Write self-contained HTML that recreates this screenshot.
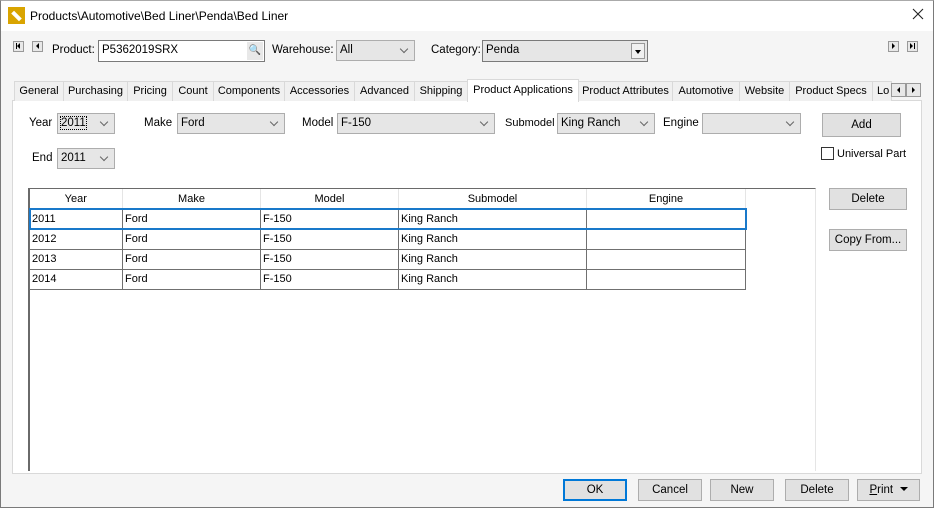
<!DOCTYPE html>
<html><head><style>
*{box-sizing:border-box;margin:0;padding:0}
body{width:934px;height:508px;overflow:hidden;font-family:"Liberation Sans",sans-serif;font-size:11px;color:#000;background:#f5f5f5;position:relative}
.a{position:absolute;white-space:nowrap}
.win{left:0;top:0;width:934px;height:508px;border:1px solid #7a7a7a;border-top:1px solid #aaa}
.title{left:1px;top:1px;width:932px;height:30px;background:#fff}
.sel{position:absolute;background:#e6e6e6;border:1px solid #adadad;padding:3px 0 0 3px;font-size:11.5px;height:21px;white-space:nowrap}
.sel:after{content:"";position:absolute;right:7px;top:5px;width:5px;height:5px;border-right:1px solid #666;border-bottom:1px solid #666;transform:rotate(45deg)}
.btn{position:absolute;background:#e1e1e1;border:1px solid #adadad;text-align:center;font-size:11.5px;padding-top:4px;height:22px;white-space:nowrap}
.tab{position:absolute;top:81px;height:20px;border:1px solid #d9d9d9;border-bottom:none;background:#f0f0f0;font-size:11px;padding:3px 0 0 0;text-align:center;white-space:nowrap;overflow:hidden}
.nav{position:absolute;width:11px;height:11px;border:1px solid #999;background:#e8e8e8}
.tri{position:absolute;width:0;height:0;border-top:3px solid transparent;border-bottom:3px solid transparent}
table{border-collapse:collapse;position:absolute;left:29px;top:189px;font-size:11px}
td{border:1px solid #707070;height:20px;padding:0 2px;white-space:nowrap}
th{font-weight:normal;height:20px;border-right:1px solid #e5e5e5;border-bottom:1px solid #e5e5e5;background:#fff}
</style></head><body>
<div class="a win"></div>
<div class="a title"></div>
<div class="a" style="left:8px;top:7px;width:17px;height:17px;background:#d9a400"></div>
<div class="a" style="left:11px;top:14px;width:11px;height:4px;background:#fff;transform:rotate(45deg)"></div>
<div class="a" style="left:30px;top:9px;font-size:12px">Products\Automotive\Bed Liner\Penda\Bed Liner</div>
<svg class="a" style="left:912px;top:8px" width="12" height="12"><path d="M1 1L11 11M11 1L1 11" stroke="#222" stroke-width="1.1"/></svg>

<div class="nav" style="left:13px;top:41px"></div><div class="a" style="left:16px;top:43px;width:1px;height:6px;background:#000"></div><div class="tri" style="left:17px;top:43px;border-right:3px solid #000"></div>
<div class="nav" style="left:32px;top:41px"></div><div class="tri" style="left:36px;top:43px;border-right:3px solid #000"></div>
<div class="a" style="left:52px;top:44px;font-size:11.5px">Product:</div>
<div class="a" style="left:98px;top:40px;width:167px;height:22px;border:1px solid #7a7a7a;background:#fff;padding:3px 0 0 3px;font-size:11.5px">P5362019SRX</div>
<div class="a" style="left:247px;top:42px;width:16px;height:18px;background:#e8e8e8;color:#2a6fb8;font-size:10px;text-align:center;padding-top:3px">🔍</div>
<div class="a" style="left:272px;top:44px;font-size:11.5px">Warehouse:</div>
<div class="sel" style="left:336px;top:40px;width:79px">All</div>
<div class="a" style="left:431px;top:44px;font-size:11.5px">Category:</div>
<div class="a" style="left:482px;top:40px;width:166px;height:22px;border:1px solid #7a7a7a;background:#e6e6e6;padding:3px 0 0 3px;font-size:11.5px">Penda</div>
<div class="a" style="left:631px;top:43px;width:14px;height:16px;border:1px solid #999;background:#f0f0f0"></div><div class="a" style="left:635px;top:50px;border-left:3px solid transparent;border-right:3px solid transparent;border-top:4px solid #000;width:0;height:0"></div>
<div class="nav" style="left:888px;top:41px"></div><div class="tri" style="left:892px;top:43px;border-left:3px solid #000"></div>
<div class="nav" style="left:907px;top:41px"></div><div class="tri" style="left:910px;top:43px;border-left:3px solid #000"></div><div class="a" style="left:914px;top:43px;width:1px;height:6px;background:#000"></div>

<div class="a" style="left:12px;top:100px;width:910px;height:374px;background:#fff;border:1px solid #d9d9d9"></div>
<div class="tab" style="left:14px;width:50px">General</div>
<div class="tab" style="left:63px;width:65px">Purchasing</div>
<div class="tab" style="left:127px;width:46px">Pricing</div>
<div class="tab" style="left:172px;width:42px">Count</div>
<div class="tab" style="left:213px;width:72px">Components</div>
<div class="tab" style="left:284px;width:71px">Accessories</div>
<div class="tab" style="left:354px;width:61px">Advanced</div>
<div class="tab" style="left:414px;width:54px">Shipping</div>
<div class="tab" style="left:467px;top:79px;height:23px;width:112px;background:#fff;padding-top:4px">Product Applications</div>
<div class="tab" style="left:578px;width:95px">Product Attributes</div>
<div class="tab" style="left:672px;width:68px">Automotive</div>
<div class="tab" style="left:739px;width:51px">Website</div>
<div class="tab" style="left:789px;width:84px">Product Specs</div>
<div class="tab" style="left:872px;width:20px;text-align:left;padding-left:4px">Lo</div>
<div class="nav" style="left:891px;top:83px;width:15px;height:14px"></div><div class="tri" style="left:897px;top:87px;border-right:3px solid #000"></div>
<div class="nav" style="left:906px;top:83px;width:15px;height:14px"></div><div class="tri" style="left:912px;top:87px;border-left:3px solid #000"></div>

<div class="a" style="left:29px;top:117px;font-size:11.5px">Year</div>
<div class="sel" style="left:57px;top:113px;width:58px"><span style="outline:1px dotted #000">2011</span></div>
<div class="a" style="left:144px;top:117px;font-size:11.5px">Make</div>
<div class="sel" style="left:177px;top:113px;width:108px">Ford</div>
<div class="a" style="left:302px;top:117px;font-size:11.5px">Model</div>
<div class="sel" style="left:337px;top:113px;width:158px">F-150</div>
<div class="a" style="left:505px;top:117px;font-size:11px">Submodel</div>
<div class="sel" style="left:557px;top:113px;width:98px">King Ranch</div>
<div class="a" style="left:663px;top:117px;font-size:11.5px">Engine</div>
<div class="sel" style="left:702px;top:113px;width:99px"></div>
<div class="btn" style="left:822px;top:113px;width:79px;height:24px;padding-top:5px">Add</div>
<div class="a" style="left:821px;top:147px;width:13px;height:13px;border:1px solid #333;background:#fff"></div>
<div class="a" style="left:837px;top:148px">Universal Part</div>
<div class="a" style="left:32px;top:152px;font-size:11.5px">End</div>
<div class="sel" style="left:57px;top:148px;width:58px">2011</div>

<div class="a" style="left:28px;top:188px;width:788px;height:283px;border-left:2px solid #6a6a6a;border-top:1px solid #6a6a6a;border-right:1px solid #e5e5e5"></div>
<table>
<tr><th style="width:93px">Year</th><th style="width:138px">Make</th><th style="width:138px">Model</th><th style="width:188px">Submodel</th><th style="width:159px">Engine</th></tr>
<tr style="outline:2px solid #1979ca;outline-offset:-1px"><td>2011</td><td>Ford</td><td>F-150</td><td>King Ranch</td><td></td></tr>
<tr><td>2012</td><td>Ford</td><td>F-150</td><td>King Ranch</td><td></td></tr>
<tr><td>2013</td><td>Ford</td><td>F-150</td><td>King Ranch</td><td></td></tr>
<tr><td>2014</td><td>Ford</td><td>F-150</td><td>King Ranch</td><td></td></tr>
</table>

<div class="btn" style="left:829px;top:188px;width:78px">Delete</div>
<div class="btn" style="left:829px;top:229px;width:78px">Copy From...</div>

<div class="btn" style="left:563px;top:479px;width:64px;border:2px solid #0078d7;padding-top:3px">OK</div>
<div class="btn" style="left:638px;top:479px;width:64px">Cancel</div>
<div class="btn" style="left:710px;top:479px;width:64px">New</div>
<div class="btn" style="left:785px;top:479px;width:64px">Delete</div>
<div class="btn" style="left:857px;top:479px;width:63px"><u>P</u>rint &nbsp;<span style="display:inline-block;width:0;height:0;border-left:4px solid transparent;border-right:4px solid transparent;border-top:4px solid #000;vertical-align:2px"></span></div>
</body></html>
